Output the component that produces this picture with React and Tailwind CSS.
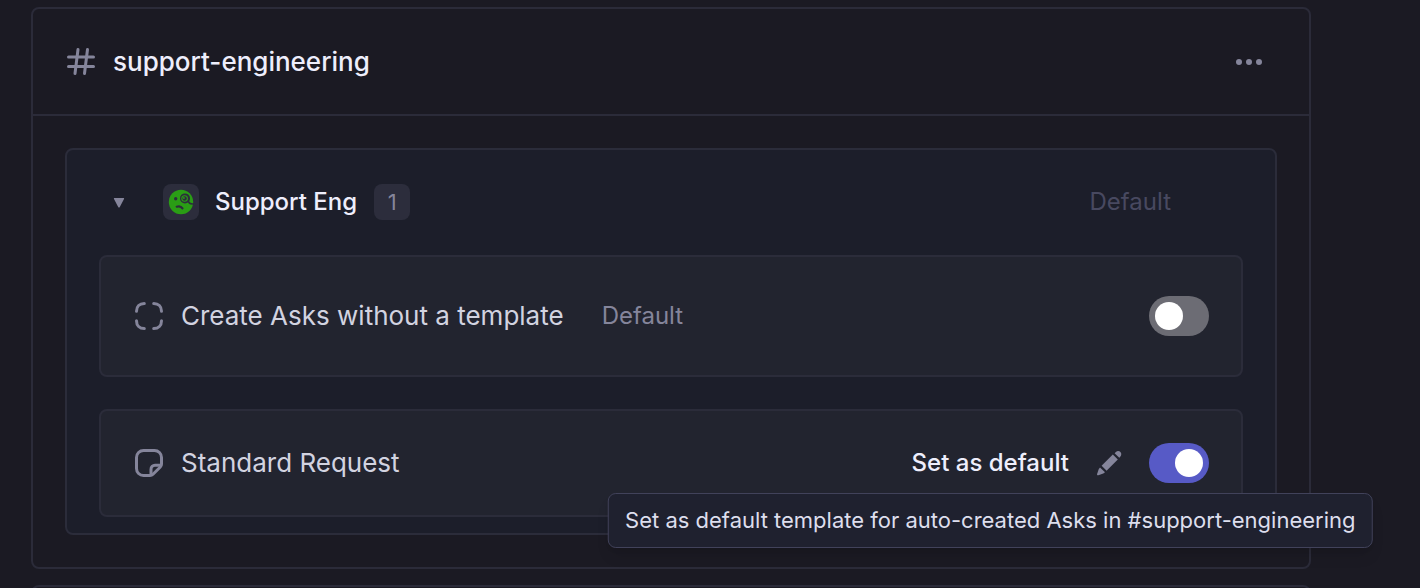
import { useState } from "react";

function HashIcon() {
  return (
    <svg viewBox="0 0 32 32" className="size-8 shrink-0 text-[#85859b]" fill="none" stroke="currentColor" strokeWidth="3" strokeLinecap="round" aria-hidden="true">
      <path d="M3.500 11h25M3.500 20.500h25M13 3.500l-3 24M22.500 3.500l-3 24" />
    </svg>
  );
}

function DashedSquareIcon() {
  return (
    <svg viewBox="0 0 32 32" className="size-8 shrink-0 text-[#85859b]" fill="none" stroke="currentColor" strokeWidth="3" strokeLinecap="round" aria-hidden="true">
      <path d="M3.5 11.3C3.5 6.5 6.5 3.5 11.3 3.5M20.7 3.5C25.5 3.5 28.5 6.5 28.5 11.3M28.5 20.7C28.5 25.5 25.5 28.5 20.7 28.5M11.3 28.5C6.5 28.5 3.5 25.5 3.5 20.7" />
    </svg>
  );
}

function TemplateIcon() {
  return (
    <svg viewBox="0 0 32 32" className="size-8 shrink-0 text-[#85859b]" fill="none" stroke="currentColor" strokeWidth="3" strokeLinejoin="round" aria-hidden="true">
      <path d="M10.5 3.5h11a7 7 0 0 1 7 7V17c0 1.200-.4 2.200-1.200 3l-7.300 7.300c-.8.8-1.800 1.200-3 1.200h-6.500a7 7 0 0 1-7-7v-11a7 7 0 0 1 7-7Z" />
      <path d="M28.300 18.200h-6.300a4 4 0 0 0-4 4V28.300" />
    </svg>
  );
}

function PencilIcon() {
  return (
    <svg viewBox="0 0 32 32" className="size-8" fill="currentColor" aria-hidden="true">
      <path d="M22.600 5.200c1.500-1.300 3.500-1.500 4.800-.3s1.100 3.300-.2 4.900l-.9 1L21.600 6.200l1-1Z" />
      <path d="M19.800 7.600l5 5L13.600 23.800l-5-5L19.800 7.600Z" />
      <path d="M7 20.400l5 4.900-1.700 1.200-4.900 1.800c-.9.3-1.600-.4-1.300-1.300l1.700-4.900L7 20.400Z" />
    </svg>
  );
}

function MonocleFace() {
  return (
    <svg viewBox="0 0 26 26" className="size-[26px]" aria-hidden="true">
      <circle cx="13" cy="13" r="12.200" fill="#2a9d15" />
      <circle cx="17" cy="9.400" r="5" fill="#2c2d3c" />
      <circle cx="16.600" cy="9.500" r="3.300" fill="#2a9d15" />
      <circle cx="16.600" cy="9.500" r="2.200" fill="#2c2d3c" />
      <circle cx="15.900" cy="9" r=".9" fill="#2a9d15" />
      <circle cx="7.700" cy="9.700" r="1.700" fill="#2c2d3c" />
      <path d="M20.500 12.500c.4 1.900 2 2.700 5 2.300" fill="none" stroke="#2c2d3c" strokeWidth="1.500" strokeLinecap="round" />
      <path d="M8.700 17.700c2.300-.8 4.500-.4 5.800 1.700" fill="none" stroke="#2c2d3c" strokeWidth="2.200" strokeLinecap="round" />
    </svg>
  );
}

function Toggle({ label, checked, onChange }) {
  return (
    <input
      type="checkbox"
      role="switch"
      aria-label={label}
      checked={checked}
      onChange={(event) => onChange(event.target.checked)}
      className="flex h-10 w-15 shrink-0 cursor-pointer appearance-none items-center rounded-full bg-[#6c6c74] px-1.5 before:size-7 before:rounded-full before:bg-white before:content-[''] checked:justify-end checked:bg-[#575ac6]"
    />
  );
}

function TemplateRow({ icon, name, children, className }) {
  return (
    <li className={`flex items-center rounded-lg border-2 border-[#2b2c3a] bg-[#22242f] px-8 ${className}`}>
      {icon}
      <span className="ml-4 text-[26px] leading-8 text-[#d2d3e0]">{name}</span>
      {children}
    </li>
  );
}

export default function App() {
  const [blankEnabled, setBlankEnabled] = useState(false);
  const [standardEnabled, setStandardEnabled] = useState(true);

  return (
    <main className="h-screen overflow-hidden bg-[#1b1a23] pt-[7px] pr-[109px] pl-[31px] font-['Inter','Liberation_Sans',sans-serif]">
      <section className="rounded-lg border-2 border-[#2b2b39]">
        <header className="flex h-[107px] items-center border-b-2 border-[#2b2b39] pr-[31px] pl-8">
          <HashIcon />
          <h1 className="ml-4 text-[26px] leading-8 font-medium text-[#eeeefc]">support-engineering</h1>
          <button type="button" aria-label="Channel options" className="ml-auto flex h-8 items-center gap-1 px-4 text-[#85859b]">
            <span className="size-1.5 rounded-full bg-current" />
            <span className="size-1.5 rounded-full bg-current" />
            <span className="size-1.5 rounded-full bg-current" />
          </button>
        </header>

        <div className="p-8">
          <section className="rounded-lg border-2 border-[#2b2c3a] bg-[#1c1e2a] px-8 pb-4">
            <header className="mb-px flex h-26 items-center pr-[72px] pl-3">
              <button type="button" aria-label="Collapse Support Eng" className="flex h-9 w-4 items-center justify-center text-[#85859b]">
                <svg viewBox="0 0 12 12" className="size-3" fill="currentColor" aria-hidden="true">
                  <path d="M1.600 2h8.800c.6 0 .9.600.6 1.100L6.800 10.900c-.4.7-1.200.7-1.600 0L1 3.100C.7 2.600 1 2 1.600 2Z" />
                </svg>
              </button>
              <span className="ml-9 flex size-9 items-center justify-center rounded-lg bg-[#2c2d3c]">
                <MonocleFace />
              </span>
              <h2 className="ml-4 text-2xl leading-8 font-medium text-[#eeeefc]">Support Eng</h2>
              <span className="ml-[17px] flex size-9 items-center justify-center rounded-lg bg-[#2c2d3c] text-[22px] text-[#85859b]">1</span>
              <span className="ml-auto text-2xl leading-8 text-[#484960]">Default</span>
            </header>

            <ul className="flex flex-col gap-8">
              <TemplateRow icon={<DashedSquareIcon />} name="Create Asks without a template" className="h-[122px]">
                <span className="ml-[38px] text-2xl leading-8 text-[#85859b]">Default</span>
                <div className="ml-auto flex">
                  <Toggle label="Create Asks without a template" checked={blankEnabled} onChange={setBlankEnabled} />
                </div>
              </TemplateRow>

              <TemplateRow icon={<TemplateIcon />} name="Standard Request" className="h-[108px]">
                <div className="ml-auto flex items-center">
                  <div className="relative">
                    <button type="button" aria-describedby="default-tip" className="block text-2xl leading-8 font-medium text-[#eeeefc]">
                      Set as default
                    </button>
                    <div
                      id="default-tip"
                      role="tooltip"
                      className="absolute top-full left-1/2 z-10 mt-3.5 -translate-x-1/2 rounded-lg border border-[#41425a] bg-[#1f212f] px-4 pt-2.5 pb-[11px] text-[22px] leading-8 whitespace-nowrap text-[#dddeed] shadow-lg"
                    >
                      Set as default template for auto-created Asks in #support-engineering
                    </div>
                  </div>
                  <button type="button" aria-label="Edit Standard Request" className="ml-6 text-[#85859b]">
                    <PencilIcon />
                  </button>
                  <div className="ml-6 flex">
                    <Toggle label="Standard Request" checked={standardEnabled} onChange={setStandardEnabled} />
                  </div>
                </div>
              </TemplateRow>
            </ul>
          </section>
        </div>
      </section>

      <section className="mt-4 h-24 rounded-lg border-2 border-[#2b2b39]" />
    </main>
  );
}
